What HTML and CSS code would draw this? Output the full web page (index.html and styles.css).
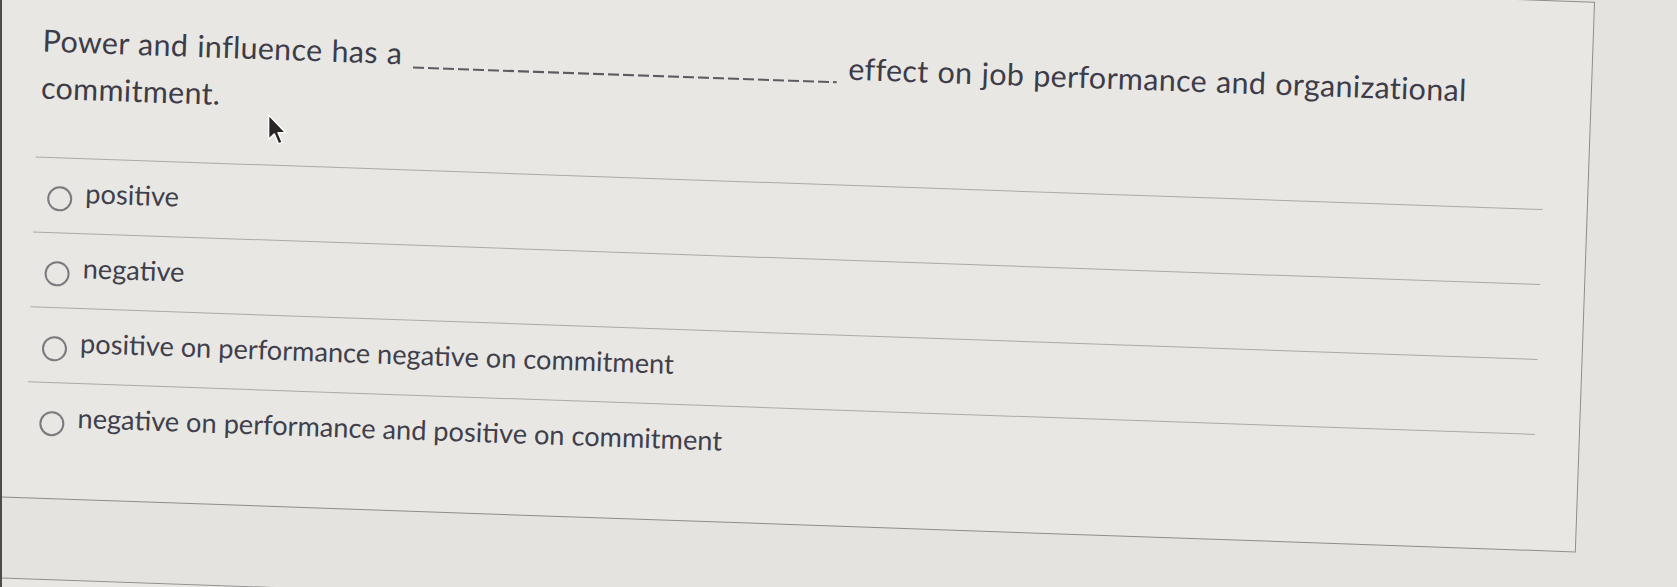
FILE: index.html
```html
<!DOCTYPE html>
<html lang="en">
<head>
<meta charset="utf-8">
<title>Question</title>
<link rel="stylesheet" href="styles.css">
</head>
<body>
  <div class="sheet">
    <div class="card">
      <p class="question">Power and influence has a <span class="blank"></span> effect on job performance and organizational commitment.</p>
      <ul class="answers">
        <li class="answer"><span class="radio"></span><span class="label">positive</span></li>
        <li class="answer"><span class="radio"></span><span class="label">negative</span></li>
        <li class="answer"><span class="radio"></span><span class="label">positive on performance negative on commitment</span></li>
        <li class="answer"><span class="radio"></span><span class="label">negative on performance and positive on commitment</span></li>
      </ul>
    </div>
    <div class="card card-next"></div>
  </div>
  <svg class="cursor" viewBox="0 0 12 20" width="20" height="34" aria-hidden="true">
    <path d="M1 1 L1 15.5 L4.4 12.3 L6.9 18.3 L9.1 17.4 L6.6 11.6 L11.2 11.6 Z" fill="#2a2427" stroke="#ffffff" stroke-width="0.8" stroke-linejoin="round"/>
  </svg>
</body>
</html>
```
FILE: styles.css
```css
html, body {
  margin: 0;
  height: 100%;
  overflow: hidden;
}

html {
  background: #e4e3e0;
}

body {
  position: relative;
  border-left: 2px solid #4d4c4b;
  background: #e4e3e0;
  font-family: Lato, "Noto Sans", sans-serif;
  color: #3d3c48;
}

.sheet {
  width: 1598px;
  margin: -54px 0 0 -4px;
  transform: rotate(2deg);
  transform-origin: 0 0;
}

.card {
  box-sizing: border-box;
  width: 1598px;
  height: 551px;
  padding: 68px 44px 0;
  border: 1px solid #8e8d8b;
  background: #e8e7e4;
}

.card-next {
  height: 300px;
  margin-top: 80px;
  padding: 0;
}

.question {
  margin: 0 0 0 3px;
  font-size: 30.5px;
  line-height: 47px;
  letter-spacing: 0.3px;
  word-spacing: 1px;
}

.blank {
  display: inline-block;
  width: 424px;
  height: 2px;
  margin: 0 2px;
  vertical-align: -4px;
  background: repeating-linear-gradient(90deg, #5c5b61 0 11px, transparent 11px 15px);
}

.answers {
  list-style: none;
  margin: 46px 0 0;
  padding: 0;
}

.answer {
  box-sizing: border-box;
  display: flex;
  align-items: center;
  height: 75px;
  padding-top: 6px;
  border-top: 1px solid #abaaa7;
}

.radio {
  flex: none;
  box-sizing: border-box;
  width: 25px;
  height: 25px;
  margin-left: 13px;
  border: 2px solid #7b7a7e;
  border-radius: 50%;
}

.label {
  margin: 0 0 13px 13px;
  font-size: 27.2px;
  line-height: 34px;
  color: #403f4b;
}

.cursor {
  position: absolute;
  left: 265px;
  top: 113px;
}
```
